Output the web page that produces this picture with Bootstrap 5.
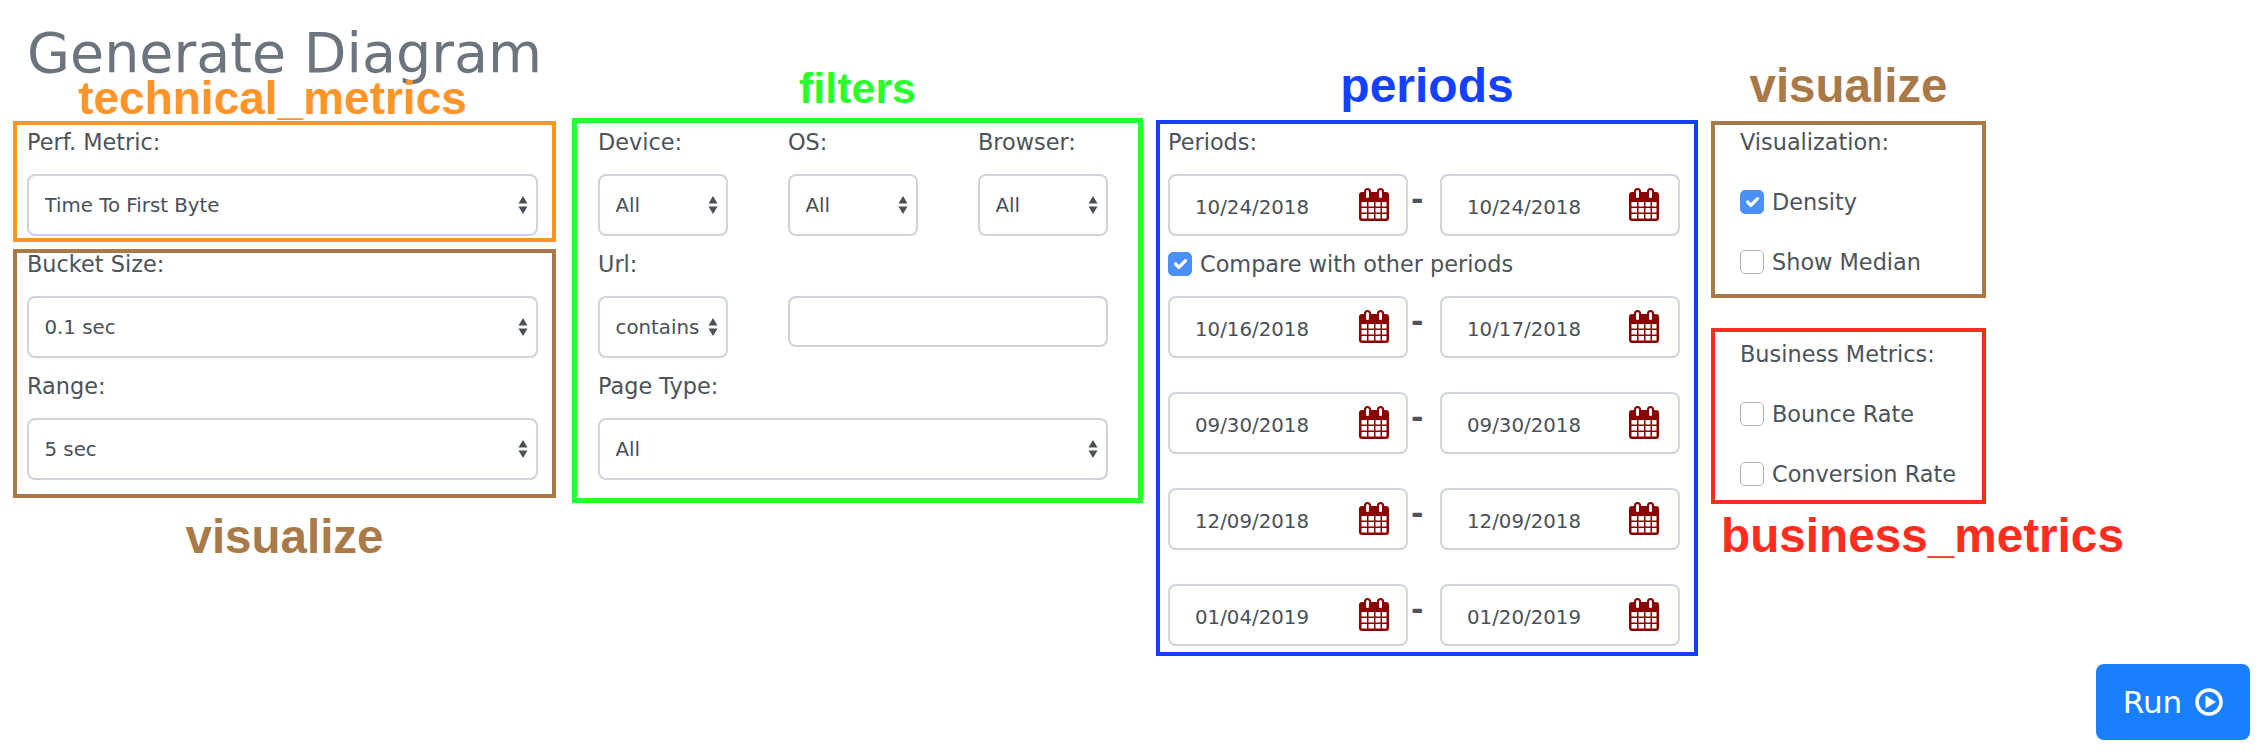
<!DOCTYPE html>
<html lang="en">
<head>
  <meta charset="UTF-8">
  <meta name="viewport" content="width=device-width, initial-scale=1">
  <title>Generate Diagram</title>
  <link href="https://cdn.jsdelivr.net/npm/bootstrap@5.3.0/dist/css/bootstrap.min.css" rel="stylesheet">
  <style>
    body { font-family: "DejaVu Sans", sans-serif; color: #4d5359; background: #fff; }
    .page-title { font-family: "DejaVu Sans", sans-serif; font-size: 55.500px; line-height: 55px; font-weight: 400; color: #6c757d; white-space: nowrap; margin: 0 0 0 14px; padding-top: 25px; }

    .col-perf { width: 543px; margin-left: 13px; }
    .col-filters { width: 571px; margin-left: 16px; }
    .col-periods { width: 542px; margin-left: 13px; }
    .col-options { width: 275px; margin-left: 13px; }

    /* annotation captions */
    .tag { font: 700 46px/46px "Liberation Sans", sans-serif; text-align: center; white-space: nowrap; }
    .tag-orange { color: #ff9428; margin-top: -5px; padding-right: 24px; }
    .tag-brown { color: #a97a48; font-size: 47.500px; }
    .tag-top { padding-top: 63px; }
    .tag-green { color: #2aff2e; font-size: 43px; padding-top: 65px; margin-bottom: 7px; }
    .tag-blue { color: #1440ff; font-size: 48px; padding-top: 63px; margin-bottom: 11px; }
    .tag-red { color: #ff2d20; font-size: 47.700px; text-align: left; margin: 9px 0 0 10px; }

    .zone { border: 4px solid; }
    .zone-orange { border-color: #ff9428; padding: 1px 14px 2px 10px; }
    .zone-brown { border-color: #a97a48; padding: 0 14px 14px 10px; margin-top: 7px; }
    .zone.zone-green { border-width: 5px; border-color: #2aff2e; padding: 3px 30px 18px 21px; }
    .zone-blue { border-color: #1440ff; padding: 2px 14px 6px 8px; }
    .zone-vis { border-color: #a97a48; padding: 1px 10px 20px 25px; margin-top: 12px; }
    .zone-biz { border-color: #ff2d20; padding: 6px 10px 14px 25px; margin-top: 30px; }

    .fld-label { display: block; font-size: 22.400px; line-height: 32px; margin: 12px 0 16px; white-space: nowrap; }
    .fld-first { margin-top: 0; }
    .fld-pull { margin-top: -5px; }

    .form-select.pick, .form-control.pick {
      font-size: 19.800px; line-height: 1.2; color: #495057; height: 62px;
      border: 2px solid #ced4da; border-radius: 8px; padding: 2px 20px 0 15.500px;
    }
    .form-select.pick {
      background-image: url("data:image/svg+xml,%3csvg xmlns='http://www.w3.org/2000/svg' viewBox='0 0 10 18'%3e%3cpath fill='%23495057' d='M5 0l4.500 7.500h-9zM5 18L.5 10.500h9z'/%3e%3c/svg%3e");
      background-position: right 8px center; background-size: 10px 18px;
    }
    .form-control.url-box { height: 51px; }
    .form-control.date-box { padding: 4px 46px 0 25px; }

    .filter-grid { display: grid; grid-template-columns: 130px 1fr 130px; column-gap: 60px; }
    .span-two { grid-column: 2 / 4; }
    .span-all { grid-column: 1 / 4; }

    .date-cell { width: 240px; }
    .date-icon { position: absolute; top: 14px; right: 19px; width: 30px; height: 33px; }
    .date-icon.end-icon { right: 21px; }
    .date-dash { width: 32px; padding-left: 3px; font-size: 30px; font-weight: 700; line-height: 52px; }
    .period-row { margin-top: 34px; }
    .compare-row { height: 60px; padding-bottom: 4px; }

    .tick { font-size: 22.400px; line-height: 24px; white-space: nowrap; }
    .tick .form-check-input { width: 24px; height: 24px; margin: 0 8px 0 0; border: 1px solid #b5b5b5; border-radius: 5px; flex: none; }
    .tick .form-check-input:checked { background-color: #4a90f7; border-color: #4a90f7; }
    .tick-first { margin-top: 32px; }
    .tick-next { margin-top: 36px; }

    .run-row { padding-right: 16px; margin-top: 8px; }
    .btn.run-btn { width: 154px; height: 76px; font-size: 31px; line-height: 1; color: #fff; background: #1a7fff; border: 0; border-radius: 8px; gap: 13px; }
    .run-btn svg { width: 28px; height: 28px; }
  </style>
</head>
<body>

  <svg class="d-none">
    <symbol id="cal" viewBox="0 0 30 33">
      <rect y="4" width="30" height="29" rx="3" fill="#8b0000"/>
      <rect x="5" width="7" height="12" rx="3.500" fill="#8b0000"/>
      <rect x="18" width="7" height="12" rx="3.500" fill="#8b0000"/>
      <rect x="7" y="2" width="3" height="8" rx="1.500" fill="#fff"/>
      <rect x="20" y="2" width="3" height="8" rx="1.500" fill="#fff"/>
      <path fill="#fff" d="M2.500 14h5.500v4.500h-5.500zM9.500 14h5.500v4.500h-5.500zM16.500 14h5v4.500h-5zM23 14h4.500v4.500h-4.500zM2.500 20h5.500v4.500h-5.500zM9.500 20h5.500v4.500h-5.500zM16.500 20h5v4.500h-5zM23 20h4.500v4.500h-4.500zM2.500 26h5.500v4.500h-5.500zM9.500 26h5.500v4.500h-5.500zM16.500 26h5v4.500h-5zM23 26h4.500v4.500h-4.500z"/>
    </symbol>
  </svg>

  <div class="d-flex align-items-start">

    <!-- Performance metric and buckets -->
    <div class="col-perf">
      <h1 class="page-title">Generate Diagram</h1>
      <div class="tag tag-orange">technical_metrics</div>
      <div class="zone zone-orange">
        <label class="fld-label fld-first" for="perfMetric">Perf. Metric:</label>
        <select id="perfMetric" class="form-select pick"><option>Time To First Byte</option></select>
      </div>
      <div class="zone zone-brown">
        <label class="fld-label fld-pull" for="bucketSize">Bucket Size:</label>
        <select id="bucketSize" class="form-select pick"><option>0.1 sec</option></select>
        <label class="fld-label" for="range">Range:</label>
        <select id="range" class="form-select pick"><option>5 sec</option></select>
      </div>
      <div class="tag tag-brown mt-3">visualize</div>
    </div>

    <!-- Filters -->
    <div class="col-filters">
      <div class="tag tag-green">filters</div>
      <div class="zone zone-green filter-grid">
        <label class="fld-label fld-first" for="device">Device:</label>
        <label class="fld-label fld-first" for="os">OS:</label>
        <label class="fld-label fld-first" for="browser">Browser:</label>
        <select id="device" class="form-select pick"><option>All</option></select>
        <select id="os" class="form-select pick"><option>All</option></select>
        <select id="browser" class="form-select pick"><option>All</option></select>
        <label class="fld-label span-all" for="urlOp">Url:</label>
        <select id="urlOp" class="form-select pick"><option>contains</option></select>
        <input type="text" class="form-control pick url-box span-two" aria-label="Url">
        <label class="fld-label span-all" for="pageType">Page Type:</label>
        <select id="pageType" class="form-select pick span-all"><option>All</option></select>
      </div>
    </div>

    <!-- Periods -->
    <div class="col-periods">
      <div class="tag tag-blue">periods</div>
      <div class="zone zone-blue">
        <label class="fld-label fld-first">Periods:</label>
        <div class="d-flex align-items-start">
          <div class="position-relative date-cell">
            <input class="form-control pick date-box" value="10/24/2018">
            <svg class="date-icon"><use href="#cal"/></svg>
          </div>
          <div class="date-dash">-</div>
          <div class="position-relative date-cell">
            <input class="form-control pick date-box" value="10/24/2018">
            <svg class="date-icon end-icon"><use href="#cal"/></svg>
          </div>
        </div>
        <div class="tick compare-row d-flex align-items-center">
          <input class="form-check-input" type="checkbox" id="compare" checked>
          <label for="compare">Compare with other periods</label>
        </div>
        <div class="d-flex align-items-start">
          <div class="position-relative date-cell">
            <input class="form-control pick date-box" value="10/16/2018">
            <svg class="date-icon"><use href="#cal"/></svg>
          </div>
          <div class="date-dash">-</div>
          <div class="position-relative date-cell">
            <input class="form-control pick date-box" value="10/17/2018">
            <svg class="date-icon end-icon"><use href="#cal"/></svg>
          </div>
        </div>
        <div class="d-flex align-items-start period-row">
          <div class="position-relative date-cell">
            <input class="form-control pick date-box" value="09/30/2018">
            <svg class="date-icon"><use href="#cal"/></svg>
          </div>
          <div class="date-dash">-</div>
          <div class="position-relative date-cell">
            <input class="form-control pick date-box" value="09/30/2018">
            <svg class="date-icon end-icon"><use href="#cal"/></svg>
          </div>
        </div>
        <div class="d-flex align-items-start period-row">
          <div class="position-relative date-cell">
            <input class="form-control pick date-box" value="12/09/2018">
            <svg class="date-icon"><use href="#cal"/></svg>
          </div>
          <div class="date-dash">-</div>
          <div class="position-relative date-cell">
            <input class="form-control pick date-box" value="12/09/2018">
            <svg class="date-icon end-icon"><use href="#cal"/></svg>
          </div>
        </div>
        <div class="d-flex align-items-start period-row">
          <div class="position-relative date-cell">
            <input class="form-control pick date-box" value="01/04/2019">
            <svg class="date-icon"><use href="#cal"/></svg>
          </div>
          <div class="date-dash">-</div>
          <div class="position-relative date-cell">
            <input class="form-control pick date-box" value="01/20/2019">
            <svg class="date-icon end-icon"><use href="#cal"/></svg>
          </div>
        </div>
      </div>
    </div>

    <!-- Visualization and business metrics -->
    <div class="col-options">
      <div class="tag tag-brown tag-top">visualize</div>
      <div class="zone zone-vis">
        <label class="fld-label fld-first m-0">Visualization:</label>
        <div class="tick tick-first d-flex align-items-center">
          <input class="form-check-input" type="checkbox" id="density" checked>
          <label for="density">Density</label>
        </div>
        <div class="tick tick-next d-flex align-items-center">
          <input class="form-check-input" type="checkbox" id="median">
          <label for="median">Show Median</label>
        </div>
      </div>
      <div class="zone zone-biz">
        <label class="fld-label fld-first m-0">Business Metrics:</label>
        <div class="tick tick-first d-flex align-items-center">
          <input class="form-check-input" type="checkbox" id="bounce">
          <label for="bounce">Bounce Rate</label>
        </div>
        <div class="tick tick-next d-flex align-items-center">
          <input class="form-check-input" type="checkbox" id="conversion">
          <label for="conversion">Conversion Rate</label>
        </div>
      </div>
      <div class="tag tag-red">business_metrics</div>
    </div>
  </div>

  <div class="d-flex justify-content-end run-row">
    <button type="button" class="btn run-btn d-flex align-items-center justify-content-center">
      Run
      <svg viewBox="0 0 28 28"><circle cx="14" cy="14" r="12" fill="none" stroke="#fff" stroke-width="3.500"/><path fill="#fff" d="M10.500 7.500L21 14l-10.500 6.500z"/></svg>
    </button>
  </div>

  <script src="https://cdn.jsdelivr.net/npm/bootstrap@5.3.0/dist/js/bootstrap.bundle.min.js"></script>
</body>
</html>
